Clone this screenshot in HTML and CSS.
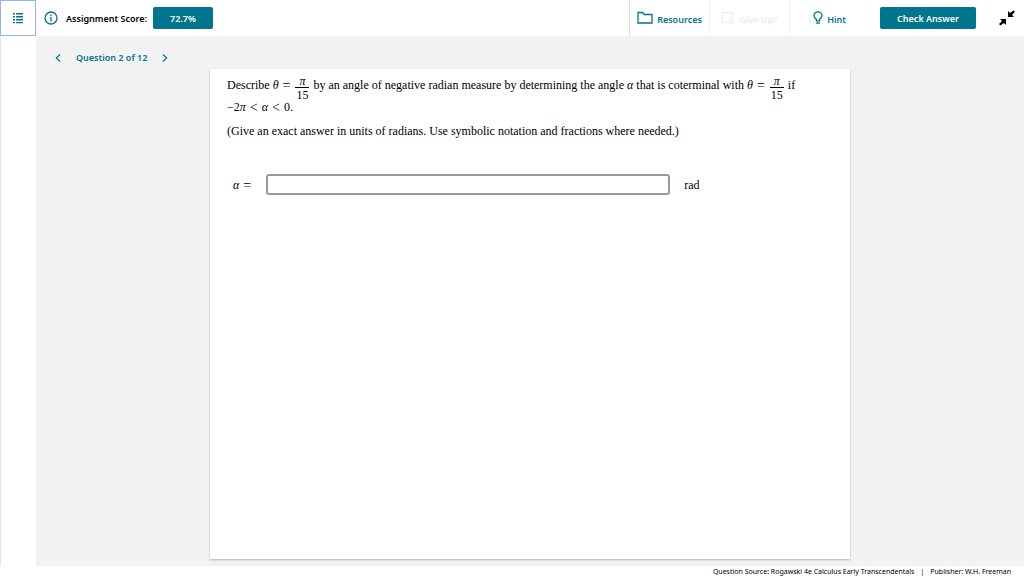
FILE: index.html
```html
<!DOCTYPE html>
<html lang="en">
<head>
  <meta charset="UTF-8">
  <meta name="viewport" content="width=device-width, initial-scale=1.0">
  <title>Question 2 of 12</title>
  <link rel="stylesheet" href="styles.css">
</head>
<body>
  <!-- Top toolbar -->
  <header class="topbar">
    <button class="menu-btn" type="button" aria-label="Menu">
      <svg width="12" height="12" viewBox="0 0 12 12" fill="currentColor">
        <path d="M1 1h2v1.500H1zM4 1h7v1.500H4zM1 4h2v1.500H1zM4 4h7v1.500H4zM1 7h2v1.500H1zM4 7h7v1.500H4zM1 10h2v1.300H1zM4 10h7v1.300H4z"/>
      </svg>
    </button>
    <div class="score">
      <svg width="14" height="14" viewBox="0 0 14 14" fill="none" stroke="currentColor" stroke-width="1.3">
        <circle cx="7" cy="7" r="6"/>
        <path d="M7 6v4.5M7 3.5v1.4"/>
      </svg>
      <span class="score-label">Assignment Score:</span>
      <button class="score-value" type="button">72.7%</button>
    </div>
    <nav class="tools">
      <button class="tool" type="button">
        <svg width="16" height="14" viewBox="0 0 16 14" fill="none" stroke="currentColor" stroke-width="1.3">
          <path d="M1 1.5h4.5l1.8 2H15v8.500H1z"/>
        </svg>
        <span>Resources</span>
      </button>
      <button class="tool" type="button" disabled>
        <svg width="14" height="14" viewBox="0 0 14 14" fill="none" stroke="currentColor" stroke-width="1.2">
          <path d="M7 11.5H1.5v-10h9.500v6M8.500 9l4 4M12.500 9l-4 4"/>
        </svg>
        <span>Give Up?</span>
      </button>
      <button class="tool" type="button">
        <svg width="10" height="14" viewBox="0 0 10 14" fill="none" stroke="currentColor" stroke-width="1.3">
          <path d="M3.4 9.800V8.400C2 7.500 1 6.300 1 4.800a4 4 0 0 1 8 0c0 1.500-1 2.700-2.400 3.600v1.400zM3.200 12h3.600"/>
        </svg>
        <span>Hint</span>
      </button>
      <div class="check-wrap">
        <button class="check" type="button">Check Answer</button>
      </div>
      <button class="collapse" type="button" aria-label="Exit full screen">
        <svg width="16" height="16" viewBox="0 0 16 16" fill="currentColor">
          <path d="M9 1v6h6l-2-2 3-3.200L14.500.5 11 3zM7 15V9H1l2 2-3 3 1.500 1.500L5 13z"/>
        </svg>
      </button>
    </nav>
  </header>

  <div class="page">
    <aside class="sidebar"></aside>
    <main class="content">
      <nav class="pager">
        <button class="arrow" type="button" aria-label="Previous question">
          <svg width="6" height="8" viewBox="0 0 6 8" fill="none" stroke="currentColor" stroke-width="1.2"><path d="M5 .5L1.300 4 5 7.500"/></svg>
        </button>
        <a href="#question">Question 2 of 12</a>
        <button class="arrow" type="button" aria-label="Next question">
          <svg width="6" height="8" viewBox="0 0 6 8" fill="none" stroke="currentColor" stroke-width="1.2"><path d="M1 .5L4.700 4 1 7.500"/></svg>
        </button>
      </nav>

      <section class="card" id="question">
        <p class="prompt">
          Describe <i>θ</i> <span class="op">=</span> <span class="frac"><i>π</i><span class="den">15</span></span> by an angle of negative radian measure by determining the angle <i>α</i> that is coterminal with <i>θ</i> <span class="op">=</span> <span class="frac"><i>π</i><span class="den">15</span></span> if
          <br>
          −2<i>π</i> <span class="op">&lt;</span> <i>α</i> <span class="op">&lt;</span> 0.
        </p>
        <p>(Give an exact answer in units of radians. Use symbolic notation and fractions where needed.)</p>
        <div class="answer">
          <label for="alpha"><i>α</i> <span class="op">=</span></label>
          <input id="alpha" type="text">
          <span>rad</span>
        </div>
      </section>
    </main>
  </div>

  <footer class="footer">
    <span>Question Source: Rogawski 4e Calculus Early Transcendentals</span>
    <span>|</span>
    <span>Publisher: W.H. Freeman</span>
  </footer>
</body>
</html>
```

FILE: styles.css
```css
* {
  box-sizing: border-box;
}

body {
  display: flex;
  flex-direction: column;
  height: 100vh;
  margin: 0;
  overflow: hidden;
  background: #fff;
  color: #000;
  font-family: "Noto Sans", sans-serif;
  font-size: 9px;
  font-weight: 600;
}

button {
  padding: 0;
  border: 0;
  background: none;
  color: #00758d;
  font: inherit;
}

svg {
  display: block;
}

/* toolbar */
.topbar {
  display: flex;
  flex: none;
  height: 36px;
}

.menu-btn {
  display: flex;
  align-items: center;
  justify-content: center;
  width: 36px;
  border: 1px solid #8fb4f5;
}

.score {
  display: flex;
  align-items: center;
  padding-left: 8px;
  color: #00758d;
}

.score-label {
  margin: 0 6px 0 8px;
  color: #000;
}

.score-value,
.check {
  height: 22px;
  border-radius: 2px;
  background: #00758d;
  color: #fff;
}

.score-value {
  width: 60px;
}

.tools {
  display: flex;
  margin-left: auto;
}

.tool {
  display: flex;
  align-items: center;
  justify-content: center;
  gap: 4px;
  width: 80px;
  border-left: 1px solid #f2f2f2;
}

.tool:first-child {
  border-left-color: #ddd;
}

.tool span {
  padding-top: 2px;
}

.tool:disabled {
  color: #ececec;
}

.check-wrap {
  display: flex;
  align-items: center;
  padding: 0 10px;
  border-left: 1px solid #f8f8f8;
}

.check {
  width: 96px;
}

.collapse {
  display: flex;
  align-items: center;
  justify-content: center;
  width: 38px;
  padding-left: 3px;
  border-left: 1px solid #f8f8f8;
  color: #000;
}

/* question area */
.page {
  display: flex;
  flex: 1;
  min-height: 0;
}

.sidebar {
  width: 36px;
  border-left: 1px solid #e6e6e6;
}

.content {
  display: flex;
  flex: 1;
  flex-direction: column;
  padding-bottom: 7px;
  background: #f2f2f2;
}

.pager {
  display: flex;
  align-items: center;
  gap: 15px;
  height: 33px;
  padding: 10px 19px 0;
}

.pager a {
  color: #00758d;
  text-decoration: none;
}

.card {
  flex: 1;
  width: 100%;
  max-width: 640px;
  margin: 0 auto;
  padding: 6px 17px;
  background: #fff;
  box-shadow: 0 1px 2px rgba(0, 0, 0, 0.25);
  font-family: "Liberation Serif", serif;
  font-size: 12px;
  font-weight: 400;
  line-height: 18px;
}

.card p {
  margin: 0 0 6px;
}

.op {
  margin: 0 1px;
  font-size: 14px;
  line-height: 1;
  vertical-align: -1px;
}

.frac {
  display: inline-flex;
  flex-direction: column;
  width: 14px;
  margin: 0 1px -4px;
  text-align: center;
  line-height: 12px;
  vertical-align: middle;
}

.den {
  border-top: 1px solid #000;
  line-height: 14px;
}

.answer {
  display: flex;
  align-items: center;
  gap: 14px;
  margin-top: 34px;
  padding-left: 6px;
}

.answer input {
  width: 404px;
  height: 21px;
  border: 2px solid #999;
  border-radius: 3px;
  background: #fff;
}

/* footer */
.footer {
  display: flex;
  flex: none;
  justify-content: flex-end;
  gap: 6px;
  height: 10px;
  padding-right: 13px;
  font-size: 7px;
  font-weight: 400;
  line-height: 11px;
}
```
